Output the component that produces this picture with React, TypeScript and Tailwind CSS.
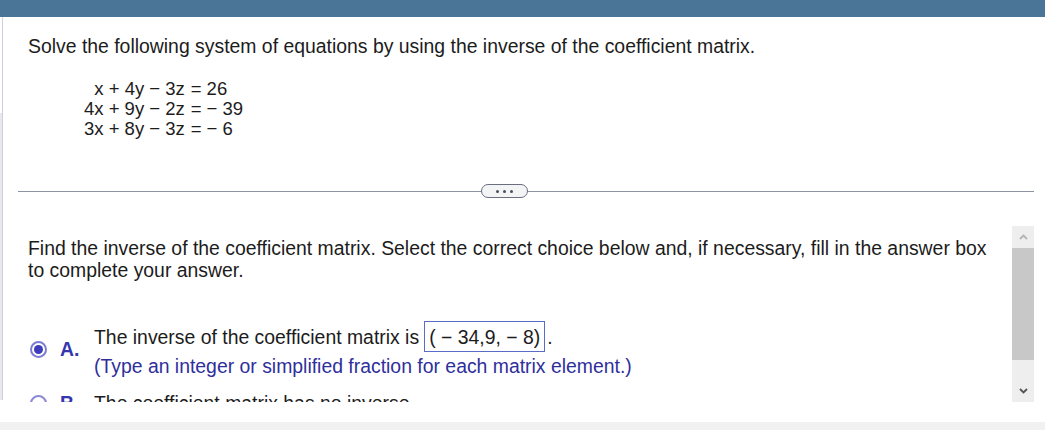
import React from 'react';

// Question panel: system of equations + inverse matrix choice
const equations = [
  { lhs: 'x + 4y − 3z', rhs: '26' },
  { lhs: '4x + 9y − 2z', rhs: '− 39' },
  { lhs: '3x + 8y − 3z', rhs: '− 6' },
];

function Radio({ checked }: { checked?: boolean }) {
  return (
    <div
      className={`w-[17px] h-[17px] rounded-full border-2 flex items-center justify-center shrink-0 ${
        checked ? 'border-[#7c7cd2]' : 'border-[#8a8ad6]'
      }`}
    >
      {checked && <div className="w-[9px] h-[9px] rounded-full bg-[#3c3cbc]" />}
    </div>
  );
}

export default function App() {
  return (
    <div
      className="w-[1045px] h-[430px] bg-white flex flex-col overflow-hidden text-[#1c1c1c]"
      style={{ fontFamily: '"Liberation Sans", Arial, sans-serif' }}
    >
      {/* top bar */}
      <div className="h-[17px] bg-[#4a7597] shrink-0" />

      <div className="flex flex-1 min-h-0">
        {/* left edge strip */}
        <div className="w-[3px] flex flex-col shrink-0">
          <div className="h-[96px] border-r border-[#cfd0dc] bg-white" />
          <div className="h-[287px] border-r border-[#cfd0dc] bg-[#e8e8ee]" />
          <div className="flex-1 bg-white" />
        </div>

        <div className="flex-1 flex flex-col min-w-0 pr-[11px]">
          {/* question */}
          <div className="pl-[25px] pt-[19px] text-[19.4px] leading-[20px]">
            Solve the following system of equations by using the inverse of the coefficient matrix.
          </div>
          <div className="ml-[81px] mt-[23px] grid grid-cols-[auto_auto_auto] justify-start text-[18.5px] leading-[20px]">
            {equations.map((eq) => (
              <React.Fragment key={eq.lhs}>
                <span className="text-right">{eq.lhs}</span>
                <span className="pl-[6px] pr-[5px]">=</span>
                <span>{eq.rhs}</span>
              </React.Fragment>
            ))}
          </div>

          {/* divider with pill */}
          <div className="ml-[15px] mt-[45px] relative h-[14px] flex items-center">
            <div className="w-full h-px bg-[#8e93a4]" />
            <div className="absolute left-[463px] top-0 w-[47px] h-[14px] rounded-full border border-[#6a6f80] bg-[#f3f4f6] flex items-center justify-center gap-[4px]">
              <span className="w-[3px] h-[3px] rounded-full bg-[#4a4f5e]" />
              <span className="w-[3px] h-[3px] rounded-full bg-[#4a4f5e]" />
              <span className="w-[3px] h-[3px] rounded-full bg-[#4a4f5e]" />
            </div>
          </div>

          {/* answer pane */}
          <div className="mt-[28px] h-[176px] flex">
            <div className="flex-1 overflow-hidden pl-[25px] pt-[11px] text-[19.4px] leading-[22px]">
              <p className="max-w-[975px]">
                Find the inverse of the coefficient matrix. Select the correct choice below and, if necessary, fill in the answer box
                to complete your answer.
              </p>

              <div className="mt-[40px] flex items-center">
                <div className="ml-[2px]">
                  <Radio checked />
                </div>
                <span className="ml-[13px] w-[34px] font-bold text-[#3636ae]">A.</span>
                <div className="flex flex-col">
                  <div className="flex items-center">
                    <span>The inverse of the coefficient matrix is</span>
                    <span className="ml-[5px] h-[31px] px-[4px] border border-[#5b6cc7] flex items-center">
                      ( − 34,9, − 8)
                    </span>
                    <span className="ml-[2px]">.</span>
                  </div>
                  <span className="text-[#2f2f9c] mt-[3px]">(Type an integer or simplified fraction for each matrix element.)</span>
                </div>
              </div>

              <div className="mt-[15px] flex items-center">
                <div className="ml-[2px]">
                  <Radio />
                </div>
                <span className="ml-[13px] w-[34px] font-bold text-[#3636ae]">B.</span>
                <span>The coefficient matrix has no inverse.</span>
              </div>
            </div>

            {/* scrollbar */}
            <div className="w-[22px] bg-[#eeeeee] flex flex-col shrink-0">
              <div className="h-[22px] flex items-center justify-center">
                <svg width="9" height="6" viewBox="0 0 9 6">
                  <path d="M1 5 L4.5 1.5 L8 5" fill="none" stroke="#b4b4b4" strokeWidth="1.8" />
                </svg>
              </div>
              <div className="h-[112px] bg-[#c8c8c8]" />
              <div className="flex-1 flex items-center justify-center pt-[20px]">
                <svg width="9" height="6" viewBox="0 0 9 6">
                  <path d="M1 1 L4.5 4.5 L8 1" fill="none" stroke="#555" strokeWidth="1.8" />
                </svg>
              </div>
            </div>
          </div>
        </div>
      </div>

      {/* bottom bar */}
      <div className="h-[8px] bg-[#f1f1f1] shrink-0" />
    </div>
  );
}
